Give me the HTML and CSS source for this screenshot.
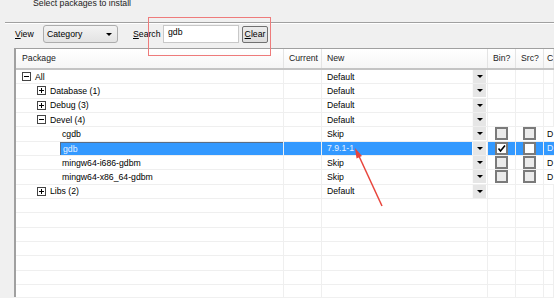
FILE: index.html
```html
<!DOCTYPE html>
<html lang="en">
<head>
    <meta charset="UTF-8">
    <title>Select Packages</title>
    <link rel="stylesheet" href="styles.css">
</head>
<body>
    <div class="title">Select packages to install</div>
    <div class="rule"></div>

    <div class="toolbar">
        <span class="label view-label"><u>V</u>iew</span>
        <div class="combo">Category<span class="tri"></span></div>
        <span class="label search-label"><u>S</u>earch</span>
        <div class="search-box">gdb</div>
        <div class="btn"><u>C</u>lear</div>
    </div>

    <div class="grid">
        <div class="row head">
            <div class="cell">Package</div>
            <div class="cell">Current</div>
            <div class="cell">New</div>
            <div class="cell">Bin?</div>
            <div class="cell">Src?</div>
            <div class="cell">C</div>
        </div>

        <div class="row">
            <div class="cell pkg lvl0"><svg class="tw" width="9" height="9"><rect x="0.5" y="0.5" width="8" height="8" fill="#fff" stroke="#444"/><path d="M2 4.5h5" stroke="#000"/></svg>All</div>
            <div class="cell"></div>
            <div class="cell new"><span class="val">Default</span><span class="drop"></span></div>
            <div class="cell"></div><div class="cell"></div><div class="cell"></div>
        </div>
        <div class="row">
            <div class="cell pkg lvl1"><svg class="tw" width="9" height="9"><rect x="0.5" y="0.5" width="8" height="8" fill="#fff" stroke="#444"/><path d="M2 4.5h5M4.5 2v5" stroke="#000"/></svg>Database (1)</div>
            <div class="cell"></div>
            <div class="cell new"><span class="val">Default</span><span class="drop"></span></div>
            <div class="cell"></div><div class="cell"></div><div class="cell"></div>
        </div>
        <div class="row">
            <div class="cell pkg lvl1"><svg class="tw" width="9" height="9"><rect x="0.5" y="0.5" width="8" height="8" fill="#fff" stroke="#444"/><path d="M2 4.5h5M4.5 2v5" stroke="#000"/></svg>Debug (3)</div>
            <div class="cell"></div>
            <div class="cell new"><span class="val">Default</span><span class="drop"></span></div>
            <div class="cell"></div><div class="cell"></div><div class="cell"></div>
        </div>
        <div class="row">
            <div class="cell pkg lvl1"><svg class="tw" width="9" height="9"><rect x="0.5" y="0.5" width="8" height="8" fill="#fff" stroke="#444"/><path d="M2 4.5h5" stroke="#000"/></svg>Devel (4)</div>
            <div class="cell"></div>
            <div class="cell new"><span class="val">Default</span><span class="drop"></span></div>
            <div class="cell"></div><div class="cell"></div><div class="cell"></div>
        </div>
        <div class="row">
            <div class="cell pkg lvl2"><span class="name">cgdb</span></div>
            <div class="cell"></div>
            <div class="cell new"><span class="val">Skip</span><span class="drop"></span></div>
            <div class="cell box"><span class="chk"></span></div>
            <div class="cell box"><span class="chk"></span></div>
            <div class="cell last">D</div>
        </div>
        <div class="row selected">
            <div class="cell pkg lvl2"><span class="name">gdb</span></div>
            <div class="cell sel"></div>
            <div class="cell new"><span class="val sel">7.9.1-1</span><span class="drop"></span></div>
            <div class="cell box sel"><span class="chk on"><svg width="9" height="9"><path d="M1.5 4.5l2 2.5L8 1.5" fill="none" stroke="#000" stroke-width="1.6"/></svg></span></div>
            <div class="cell box sel"><span class="chk on"></span></div>
            <div class="cell last sel">D</div>
        </div>
        <div class="row">
            <div class="cell pkg lvl2"><span class="name">mingw64-i686-gdbm</span></div>
            <div class="cell"></div>
            <div class="cell new"><span class="val">Skip</span><span class="drop"></span></div>
            <div class="cell box"><span class="chk"></span></div>
            <div class="cell box"><span class="chk"></span></div>
            <div class="cell last">D</div>
        </div>
        <div class="row">
            <div class="cell pkg lvl2"><span class="name">mingw64-x86_64-gdbm</span></div>
            <div class="cell"></div>
            <div class="cell new"><span class="val">Skip</span><span class="drop"></span></div>
            <div class="cell box"><span class="chk"></span></div>
            <div class="cell box"><span class="chk"></span></div>
            <div class="cell last">D</div>
        </div>
        <div class="row">
            <div class="cell pkg lvl1"><svg class="tw" width="9" height="9"><rect x="0.5" y="0.5" width="8" height="8" fill="#fff" stroke="#444"/><path d="M2 4.5h5M4.5 2v5" stroke="#000"/></svg>Libs (2)</div>
            <div class="cell"></div>
            <div class="cell new"><span class="val">Default</span><span class="drop"></span></div>
            <div class="cell"></div><div class="cell"></div><div class="cell"></div>
        </div>

        <div class="row"><div class="cell"></div><div class="cell"></div><div class="cell"></div><div class="cell"></div><div class="cell"></div><div class="cell"></div></div>
        <div class="row"><div class="cell"></div><div class="cell"></div><div class="cell"></div><div class="cell"></div><div class="cell"></div><div class="cell"></div></div>
        <div class="row"><div class="cell"></div><div class="cell"></div><div class="cell"></div><div class="cell"></div><div class="cell"></div><div class="cell"></div></div>
        <div class="row"><div class="cell"></div><div class="cell"></div><div class="cell"></div><div class="cell"></div><div class="cell"></div><div class="cell"></div></div>
        <div class="row"><div class="cell"></div><div class="cell"></div><div class="cell"></div><div class="cell"></div><div class="cell"></div><div class="cell"></div></div>
        <div class="row"><div class="cell"></div><div class="cell"></div><div class="cell"></div><div class="cell"></div><div class="cell"></div><div class="cell"></div></div>
        <div class="row"><div class="cell"></div><div class="cell"></div><div class="cell"></div><div class="cell"></div><div class="cell"></div><div class="cell"></div></div>
    </div>

    <!-- annotation drawn over the screenshot -->
    <div class="mark-box"></div>
    <svg class="mark-arrow" width="554" height="298">
        <line x1="382" y1="206" x2="358" y2="154" stroke="#e8453c" stroke-width="1.5"/>
        <polygon points="355,148 362,156 356.5,158.5" fill="#e8453c"/>
    </svg>
</body>
</html>
```

FILE: styles.css
```css
body {
    margin: 0;
    width: 554px;
    height: 298px;
    overflow: hidden;
    background-color: #f0f0f0;
    font-family: "Liberation Sans", Arial, sans-serif;
    font-size: 8.7px;
    color: #000;
}

.title {
    height: 22px;
    line-height: 6px;
    padding-left: 33px;
    color: #222;
}

.rule {
    margin-left: 5px;
    border-top: 1px solid #a0a0a0;
    border-bottom: 1px solid #fff;
}

.toolbar {
    display: flex;
    align-items: flex-start;
    height: 24px;
    padding-top: 1px;
    padding-left: 15px;
    box-sizing: border-box;
}

.label {
    line-height: 18px;
}

.view-label {
    width: 28px;
}

.search-label {
    width: 30px;
    margin-left: 15px;
}

.combo {
    display: flex;
    align-items: center;
    justify-content: space-between;
    width: 75px;
    height: 18px;
    box-sizing: border-box;
    padding: 0 5px 0 3px;
    border: 1px solid #acacac;
    border-radius: 3px;
    background: linear-gradient(#f3f3f3, #e3e3e3);
}

.tri {
    border-left: 3px solid transparent;
    border-right: 3px solid transparent;
    border-top: 3px solid #000;
}

.search-box {
    width: 76px;
    height: 18px;
    box-sizing: border-box;
    padding: 1px 4px;
    border: 1px solid #c8c8c8;
    background-color: #fff;
}

.btn {
    width: 26px;
    height: 17px;
    margin-top: 1px;
    margin-left: 3px;
    box-sizing: border-box;
    border: 1px solid #707070;
    border-radius: 2px;
    background: linear-gradient(#ececec, #dcdcdc);
    text-align: center;
    line-height: 15px;
}

.grid {
    height: 249px;
    box-sizing: border-box;
    overflow: hidden;
    margin-left: 14px;
    border-left: 2px solid #a0a0a0;
    border-top: 1px solid #a0a0a0;
    background-color: #fff;
}

.row {
    display: grid;
    grid-template-columns: 268px 38px 166px 28px 28px 10px;
    height: 14.33px;
}

.row.head {
    height: 19px;
    background: linear-gradient(#fff, #f6f6f6);
    border-bottom: 2px solid #c4c4c4;
    color: #222;
}

.head .cell {
    padding-left: 5px;
    line-height: 17px;
    border-right: 1px solid #e4e4e4;
    border-bottom: none;
}

.head .cell:first-child {
    padding-left: 6px;
}

.head .cell:last-child {
    padding-left: 3px;
}

.cell {
    display: flex;
    align-items: center;
    box-sizing: border-box;
    min-width: 0;
    overflow: hidden;
    white-space: nowrap;
    border-right: 1px solid #efefef;
    border-bottom: 1px solid #efefef;
}

.pkg.lvl0 {
    padding-left: 6px;
}

.pkg.lvl1 {
    padding-left: 21px;
}

.pkg.lvl2 {
    padding-left: 44px;
}

.tw {
    flex: none;
    margin-right: 4px;
}

.name {
    align-self: stretch;
    display: flex;
    align-items: center;
    flex: 1;
    padding-left: 2px;
}

.new {
    justify-content: space-between;
    padding-right: 1px;
}

.val {
    align-self: stretch;
    display: flex;
    align-items: center;
    flex: 1;
    padding-left: 5px;
}

.drop {
    display: flex;
    align-items: center;
    justify-content: center;
    width: 13px;
    height: 13px;
    flex: none;
    background-color: #e6e6e6;
    border-left: 1px solid #fafafa;
}

.drop::after {
    content: "";
    border-left: 3px solid transparent;
    border-right: 3px solid transparent;
    border-top: 3px solid #000;
}

.box {
    justify-content: center;
}

.chk {
    display: flex;
    align-items: center;
    justify-content: center;
    width: 13px;
    height: 13px;
    box-sizing: border-box;
    border: 2px solid #7a7a7a;
    background-color: #ebebeb;
}

.chk.on {
    background-color: #fff;
}

.last {
    padding-left: 3px;
    border-right: none;
}

.selected .name,
.selected .sel {
    background-color: #3399ff;
    color: #e8f2ff;
}

.selected .name {
    border-top: 1px solid #5a6e86;
    border-left: 1px solid #5a6e86;
    box-sizing: border-box;
}

.mark-box {
    position: absolute;
    left: 148px;
    top: 17px;
    width: 121px;
    height: 37px;
    border: 1px solid #ee7b7b;
}

.mark-arrow {
    position: absolute;
    left: 0;
    top: 0;
}
```
